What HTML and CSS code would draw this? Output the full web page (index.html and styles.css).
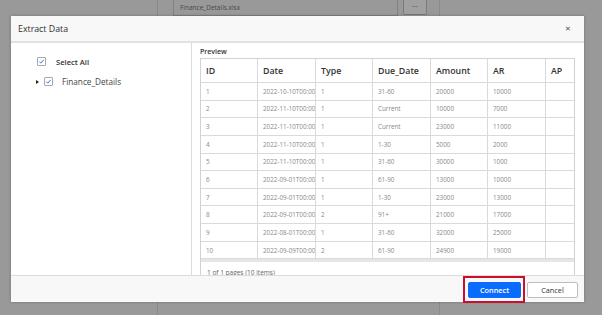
FILE: index.html
```html
<!DOCTYPE html>
<html>
<head>
<meta charset="utf-8">
<link rel="stylesheet" href="styles.css">
</head>
<body>
<div class="page">
  <div class="bg">
    <div class="bg-col bg-left"></div>
    <div class="bg-col bg-mid">
      <div class="file-row">
        <div class="file-input">Finance_Details.xlsx</div>
        <div class="file-btn">•••</div>
      </div>
    </div>
    <div class="bg-right"></div>
  </div>

  <div class="dialog">
    <div class="dlg-head">
      <span class="dlg-title">Extract Data</span>
      <span class="dlg-close">✕</span>
    </div>
    <div class="dlg-body">
      <div class="tree">
        <div class="tree-row select-all">
          <span class="cb"><svg viewBox="0 0 10 10" width="9" height="9"><path d="M2.6 5.2 L4.2 6.8 L7.4 3.2" fill="none" stroke="#2f6fe0" stroke-width="1.1"/></svg></span>
          <span class="sa-label">Select All</span>
        </div>
        <div class="tree-row node">
          <span class="arrow"></span>
          <span class="cb"><svg viewBox="0 0 10 10" width="9" height="9"><path d="M2.6 5.2 L4.2 6.8 L7.4 3.2" fill="none" stroke="#2f6fe0" stroke-width="1.1"/></svg></span>
          <span class="node-label">Finance_Details</span>
        </div>
      </div>
      <div class="preview">
        <div class="preview-label">Preview</div>
        <div class="grid">
          <div class="grid-scroll">
            <div class="row head">
              <div class="cell">ID</div><div class="cell">Date</div><div class="cell">Type</div><div class="cell">Due_Date</div><div class="cell">Amount</div><div class="cell">AR</div><div class="cell">AP</div>
            </div>
            <div class="row"><div class="cell">1</div><div class="cell">2022-10-10T00:00:00</div><div class="cell">1</div><div class="cell">31-60</div><div class="cell">20000</div><div class="cell">10000</div><div class="cell"></div></div>
            <div class="row"><div class="cell">2</div><div class="cell">2022-11-10T00:00:00</div><div class="cell">1</div><div class="cell">Current</div><div class="cell">10000</div><div class="cell">7000</div><div class="cell"></div></div>
            <div class="row"><div class="cell">3</div><div class="cell">2022-11-10T00:00:00</div><div class="cell">1</div><div class="cell">Current</div><div class="cell">23000</div><div class="cell">11000</div><div class="cell"></div></div>
            <div class="row"><div class="cell">4</div><div class="cell">2022-11-10T00:00:00</div><div class="cell">1</div><div class="cell">1-30</div><div class="cell">5000</div><div class="cell">2000</div><div class="cell"></div></div>
            <div class="row"><div class="cell">5</div><div class="cell">2022-11-10T00:00:00</div><div class="cell">1</div><div class="cell">31-60</div><div class="cell">30000</div><div class="cell">1000</div><div class="cell"></div></div>
            <div class="row"><div class="cell">6</div><div class="cell">2022-09-01T00:00:00</div><div class="cell">1</div><div class="cell">61-90</div><div class="cell">13000</div><div class="cell">10000</div><div class="cell"></div></div>
            <div class="row"><div class="cell">7</div><div class="cell">2022-09-01T00:00:00</div><div class="cell">1</div><div class="cell">1-30</div><div class="cell">23000</div><div class="cell">13000</div><div class="cell"></div></div>
            <div class="row"><div class="cell">8</div><div class="cell">2022-09-01T00:00:00</div><div class="cell">2</div><div class="cell">91+</div><div class="cell">21000</div><div class="cell">17000</div><div class="cell"></div></div>
            <div class="row"><div class="cell">9</div><div class="cell">2022-08-01T00:00:00</div><div class="cell">1</div><div class="cell">31-60</div><div class="cell">32000</div><div class="cell">25000</div><div class="cell"></div></div>
            <div class="row"><div class="cell">10</div><div class="cell">2022-09-09T00:00:00</div><div class="cell">2</div><div class="cell">61-90</div><div class="cell">24900</div><div class="cell">19000</div><div class="cell"></div></div>
          </div>
          <div class="hscroll"></div>
          <div class="pager">1 of 1 pages (10 items)</div>
        </div>
      </div>
    </div>
    <div class="dlg-foot">
      <span class="highlight"><button class="btn primary">Connect</button></span>
      <button class="btn secondary">Cancel</button>
    </div>
  </div>
</div>
</body>
</html>
```

FILE: styles.css
```css
* { box-sizing: border-box; }
html, body { margin: 0; padding: 0; }
body {
  width: 602px;
  height: 315px;
  overflow: hidden;
  background: #999999;
  font-family: "Open Sans", "Noto Sans", sans-serif;
}
.page {
  position: relative;
  width: 602px;
  height: 315px;
}
.bg {
  display: flex;
  height: 315px;
}
.bg-col { height: 100%; }
.bg-left {
  width: 158px;
  border-right: 1px solid #8a8a8a;
}
.bg-mid {
  width: 282px;
  border-right: 1px solid #8a8a8a;
  padding-left: 15px;
}
.bg-right { flex: 1; }
.file-row {
  display: flex;
  gap: 5px;
  height: 16px;
}
.file-input {
  width: 225px;
  height: 16px;
  border: 1px solid #808080;
  border-top: none;
  padding-left: 6px;
  font-size: 6.5px;
  line-height: 15px;
  color: #4a4a4a;
}
.file-btn {
  width: 24px;
  height: 15px;
  border: 1px solid #7a7a7a;
  border-top: none;
  border-radius: 0 0 2px 2px;
  background: #a0a0a0;
  font-size: 4px;
  line-height: 14px;
  text-align: center;
  color: #444;
  letter-spacing: 0.5px;
}

.dialog {
  position: absolute;
  left: 11px;
  top: 16px;
  width: 573px;
  height: 286px;
  background: #ffffff;
  box-shadow: 0 0 3px rgba(0,0,0,0.25);
  display: flex;
  flex-direction: column;
}
.dlg-head {
  height: 27px;
  flex: none;
  background: #f8f8f8;
  border-bottom: 2px solid #e2e2e2;
  display: flex;
  align-items: center;
  justify-content: space-between;
  padding: 0 13px 0 7px;
}
.dlg-title {
  font-size: 8.8px;
  color: #2e2e2e;
  font-weight: 500;
}
.dlg-close {
  font-size: 6.5px;
  color: #555;
}
.dlg-body {
  flex: 1;
  display: flex;
  min-height: 0;
  overflow: hidden;
}
.tree {
  width: 181px;
  flex: none;
  border-right: 1px solid #dcdcdc;
  padding: 13px 0 0 25px;
}
.tree-row {
  display: flex;
  align-items: center;
}
.select-all { height: 11px; gap: 10px; margin-left: 1px; }
.node { height: 11px; margin-top: 9px; }
.cb {
  width: 9px;
  height: 9px;
  border: 1px solid #a8a8a8;
  border-radius: 1px;
  background: #fff;
  display: flex;
  align-items: center;
  justify-content: center;
}
.cb svg { display: block; flex: none; }
.arrow {
  width: 0;
  height: 0;
  border-top: 2px solid transparent;
  border-bottom: 2px solid transparent;
  border-left: 3px solid #222;
  margin-right: 5px;
}
.sa-label {
  font-size: 7.6px;
  font-weight: 600;
  color: #333;
}
.node-label {
  font-size: 8.2px;
  color: #444;
  margin-left: 9px;
}
.preview {
  flex: 1;
  min-width: 0;
  padding: 3px 9px 0 8px;
  display: flex;
  flex-direction: column;
  overflow: hidden;
}
.preview-label {
  font-size: 7px;
  font-weight: 600;
  color: #333;
  height: 12px;
  line-height: 11px;
  flex: none;
}
.grid {
  flex: none;
  border: 1px solid #d2d2d2;
  border-bottom: none;
  overflow: hidden;
  height: 230px;
}
.grid-scroll {
  width: 410px;
}
.row {
  display: grid;
  grid-template-columns: 57px 58px 57px 58px 57px 58px 57px;
  height: 17.65px;
  border-bottom: 1px solid #dadada;
}
.row.head {
  height: 24px;
}
.cell {
  border-right: 1px solid #dadada;
  padding-left: 5px;
  font-size: 6.3px;
  color: #888888;
  white-space: nowrap;
  overflow: hidden;
  text-overflow: clip;
  display: flex;
  align-items: center;
}
.row.head .cell {
  font-size: 8.8px;
  font-weight: 600;
  color: #333;
}
.hscroll {
  height: 3px;
  background: #e6e6e6;
}
.pager {
  font-size: 6.5px;
  color: #666;
  padding: 6px 0 0 6px;
}
.dlg-foot {
  height: 27px;
  flex: none;
  background: #f8f8f8;
  border-top: 1px solid #dcdcdc;
  display: flex;
  justify-content: flex-end;
  align-items: flex-start;
  gap: 2px;
  padding-right: 6px;
}
.highlight {
  display: flex;
  border: 2px solid #c8102e;
  padding: 4px 2px 3px 3px;
}
.btn {
  height: 16px;
  font-family: "Open Sans", "Noto Sans", sans-serif;
  font-size: 7.3px;
  border-radius: 2px;
  padding: 0;
  margin: 0;
  line-height: 14px;
}
.primary {
  width: 53px;
  background: #0a6cff;
  border: 1px solid #0a6cff;
  color: #fff;
  font-weight: 600;
}
.secondary {
  width: 51px;
  margin-top: 6px;
  background: #fff;
  border: 1px solid #bdbdbd;
  color: #333;
}
```
